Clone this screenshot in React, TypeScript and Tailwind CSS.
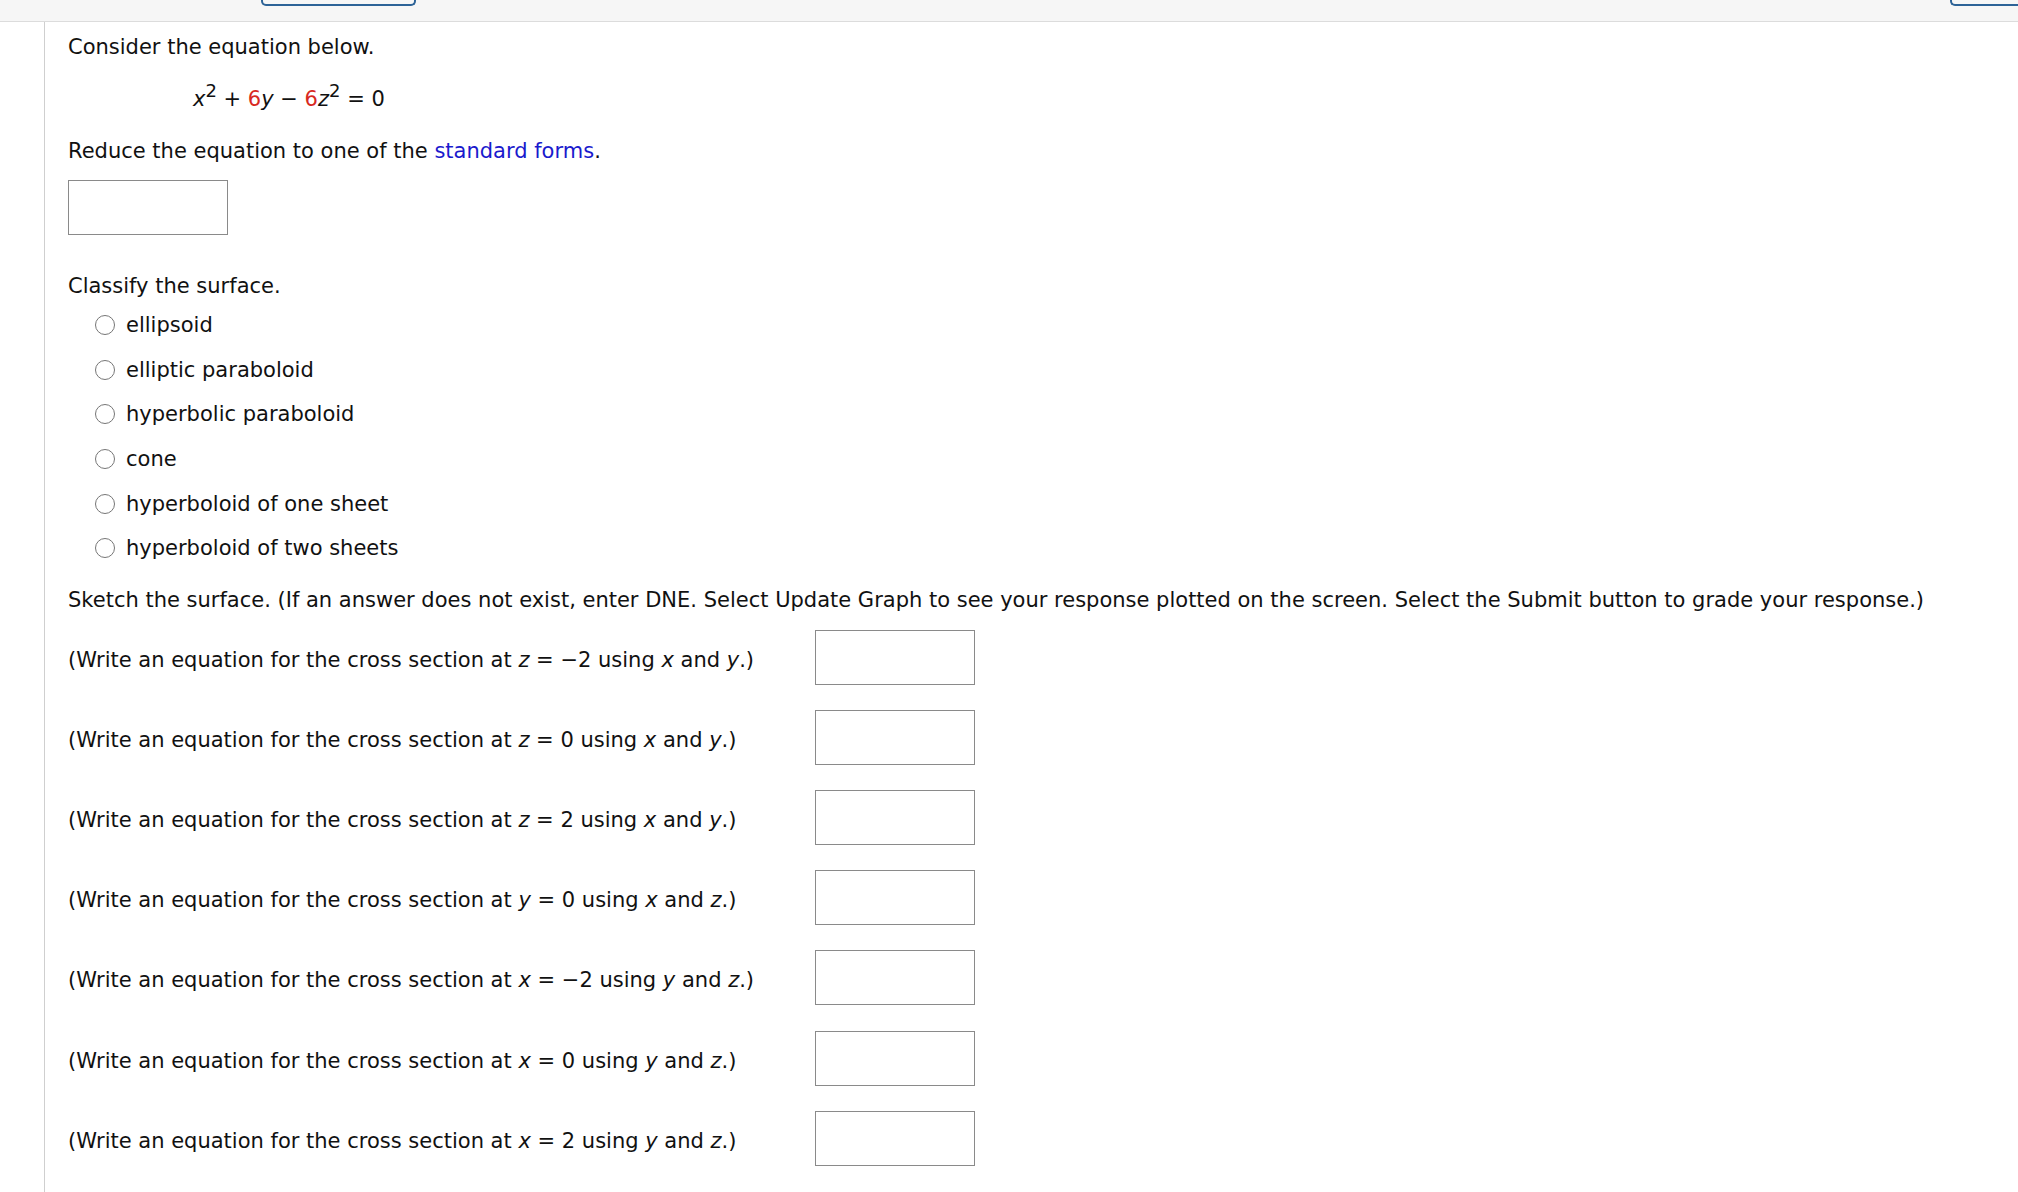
import React from "react";

const font = { fontFamily: '"DejaVu Sans", Verdana, sans-serif' };

function Radio({ label }: { label: string }) {
  return (
    <div className="flex h-[44.7px] items-center">
      <span className="ml-[27px] box-border h-[20px] w-[20px] rounded-full border-[1.5px] border-[#767676] bg-white" />
      <span className="ml-[11px]">{label}</span>
    </div>
  );
}

function Row({ children }: { children: React.ReactNode }) {
  return (
    <div className="flex h-[80.2px] items-center">
      <div className="w-[747px] whitespace-nowrap">{children}</div>
      <div className="relative -top-[2.5px] box-border h-[55px] w-[160px] border border-[#8a8a8a] bg-white" />
    </div>
  );
}

const I = ({ c }: { c: string }) => <i className="italic">{c}</i>;

export default function App() {
  const rows: [string, string, string, string][] = [
    ["z", "\u22122", "x", "y"],
    ["z", "0", "x", "y"],
    ["z", "2", "x", "y"],
    ["y", "0", "x", "z"],
    ["x", "\u22122", "y", "z"],
    ["x", "0", "y", "z"],
    ["x", "2", "y", "z"],
  ];
  return (
    <div className="h-[1192px] w-[2018px] overflow-hidden bg-white text-[21px] leading-[26px] text-[#111]" style={font}>
      <div className="flex h-[22px] border-b border-[#dcdcdc] bg-[#f6f6f6]">
        <div className="ml-[261px] box-border h-[6px] w-[155px] rounded-b-[5px] border-2 border-t-0 border-[#2d6397]" />
        <div className="ml-auto box-border h-[6px] w-[68px] rounded-bl-[5px] border-2 border-r-0 border-t-0 border-[#2d6397]" />
      </div>
      <div className="flex h-[1170px]">
        <div className="w-[45px] shrink-0 border-r border-[#cfcfcf]" />
        <div className="pl-[23px] pt-[12px]">
          <p>Consider the equation below.</p>
          <p className="ml-[125px] mt-[26px] h-[26px] whitespace-nowrap">
            <I c="x" />
            <span className="relative -top-[9px] text-[18px] leading-none">2</span>
            {" + "}
            <span className="text-[#d8291f]">6</span>
            <I c="y" />
            {" \u2212 "}
            <span className="text-[#d8291f]">6</span>
            <I c="z" />
            <span className="relative -top-[9px] text-[18px] leading-none">2</span>
            {" = 0"}
          </p>
          <p className="mt-[26px]">
            Reduce the equation to one of the <span className="text-[#1a1acd]">standard forms</span>.
          </p>
          <div className="mt-[16px] box-border h-[55px] w-[160px] border border-[#8a8a8a] bg-white" />
          <p className="mt-[38px]">Classify the surface.</p>
          <div className="mt-[3.5px]">
            {[
              "ellipsoid",
              "elliptic paraboloid",
              "hyperbolic paraboloid",
              "cone",
              "hyperboloid of one sheet",
              "hyperboloid of two sheets",
            ].map((l) => (
              <Radio key={l} label={l} />
            ))}
          </div>
          <p className="mt-[16px] whitespace-nowrap">
            Sketch the surface. (If an answer does not exist, enter DNE. Select Update Graph to see your response plotted on the screen. Select the Submit button to grade your response.)
          </p>
          <div className="mt-[7px]">
            {rows.map(([v, n, a, b], i) => (
              <Row key={i}>
                (Write an equation for the cross section at <I c={v} /> = {n} using <I c={a} /> and <I c={b} />.)
              </Row>
            ))}
          </div>
        </div>
      </div>
    </div>
  );
}
